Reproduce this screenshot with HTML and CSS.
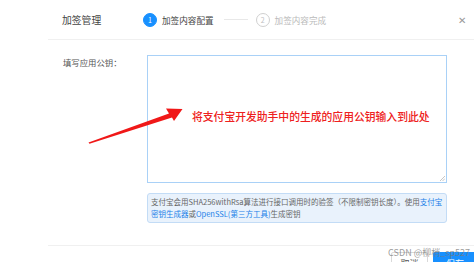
FILE: index.html
```html
<!DOCTYPE html>
<html lang="zh-CN">
<head>
  <meta charset="UTF-8" />
  <title>加签管理</title>
  <link rel="stylesheet" href="styles.css">
</head>
<body>

<div class="dialog">
  <div class="header">
    <span class="title">加签管理</span>
    <div class="steps">
      <span class="step-num active">1</span>
      <span class="step-text active">加签内容配置</span>
      <span class="step-line"></span>
      <span class="step-num">2</span>
      <span class="step-text">加签内容完成</span>
    </div>
    <span class="close">&#x2715;</span>
  </div>

  <div class="form-row">
    <label class="form-label">填写应用公钥：</label>
    <div class="form-field">
      <div class="key-input">
        <span class="hint">将支付宝开发助手中的生成的应用公钥输入到此处</span>
        <svg class="resize" width="6" height="6" viewBox="0 0 6 6">
          <path d="M1 6 L6 1 M3.5 6 L6 3.5" stroke="#b8b8b8" stroke-width="0.8" />
        </svg>
      </div>
      <div class="notice">
        支付宝会用SHA256withRsa算法进行接口调用时的验签（不限制密钥长度）。使用<a>支付宝密钥生成器</a>或<a>OpenSSL(第三方工具)</a>生成密钥
      </div>
    </div>
  </div>

  <div class="footer">
    <span class="btn">取消</span>
    <span class="btn primary">保存</span>
    <span class="watermark">CSDN @柳梢_sp527</span>
  </div>
</div>

<!-- annotation arrow drawn over the screenshot -->
<svg class="arrow" width="474" height="262" viewBox="0 0 474 262">
  <polygon points="88.5,142.5 169,113.5 166,108.5 182.5,109 174,121 172,117.5 89.5,143.8" fill="#f01818" />
</svg>

</body>
</html>
```

FILE: styles.css
```css
body {
  margin: 0;
  background: #fff;
  font-family: "Noto Sans CJK SC", "Noto Sans", sans-serif;
  color: #333;
  width: 474px;
  height: 262px;
  overflow: hidden;
  position: relative;
}

.dialog {
  margin-left: 48px;
}

.header {
  height: 39px;
  border-bottom: 1px solid #f0f0f0;
  display: flex;
  align-items: center;
  padding-left: 14px;
}

.title {
  font-size: 9.8px;
  color: #444;
  width: 81px;
}

.steps {
  display: flex;
  align-items: center;
  flex: 1;
}

.step-num {
  width: 12px;
  height: 12px;
  border: 1px solid #d0d0d0;
  border-radius: 50%;
  font-size: 7px;
  color: #c0c0c0;
  display: flex;
  align-items: center;
  justify-content: center;
  margin-right: 5px;
}

.step-num.active {
  background: #1890ff;
  border-color: #1890ff;
  color: #fff;
}

.step-text {
  font-size: 8.6px;
  color: #bbb;
}

.step-text.active {
  color: #444;
}

.step-line {
  width: 24px;
  height: 1px;
  background: #e8e8e8;
  margin: 0 8px 0 10px;
}

.close {
  font-size: 10px;
  color: #999;
  margin-right: 8px;
}

.form-row {
  display: flex;
  margin-top: 15px;
}

.form-label {
  width: 84px;
  padding-left: 15px;
  font-size: 8.4px;
  color: #555;
  line-height: 14px;
}

.form-field {
  width: 300px;
}

.key-input {
  height: 128px;
  border: 1px solid #a9d1f7;
  position: relative;
  padding: 46px 0 0 44px;
  box-sizing: border-box;
}

.hint {
  font-size: 10.8px;
  font-weight: 500;
  color: #ee2020;
  white-space: nowrap;
  line-height: 14px;
}

.resize {
  position: absolute;
  right: 1px;
  bottom: 1px;
}

.notice {
  margin-top: 10px;
  height: 30px;
  box-sizing: border-box;
  background: #e9f2fc;
  border: 1px solid #c3dcf6;
  border-radius: 3px;
  padding: 2px 3px 0 3px;
  font-size: 7.5px;
  line-height: 11.5px;
  color: #666;
}

.notice a {
  color: #1a7fe8;
}

.footer {
  margin-top: 22px;
  margin-right: -3px;
  border-top: 1px solid #f0f0f0;
  display: flex;
  justify-content: flex-end;
  padding-top: 6px;
  position: relative;
}

.btn {
  width: 37px;
  height: 22px;
  border: 1px solid #d9d9d9;
  border-radius: 2px;
  font-size: 9px;
  color: #555;
  display: flex;
  justify-content: center;
  padding-top: 4px;
  box-sizing: border-box;
  margin-right: 5px;
}

.btn.primary {
  width: 44px;
  margin-right: 0;
  background: #1890ff;
  border-color: #1890ff;
  color: #fff;
}

.watermark {
  position: absolute;
  right: 7px;
  top: 0px;
  font-size: 9px;
  color: rgba(120, 120, 120, 0.75);
  white-space: nowrap;
}

.arrow {
  position: absolute;
  left: 0;
  top: 0;
  pointer-events: none;
}
```
